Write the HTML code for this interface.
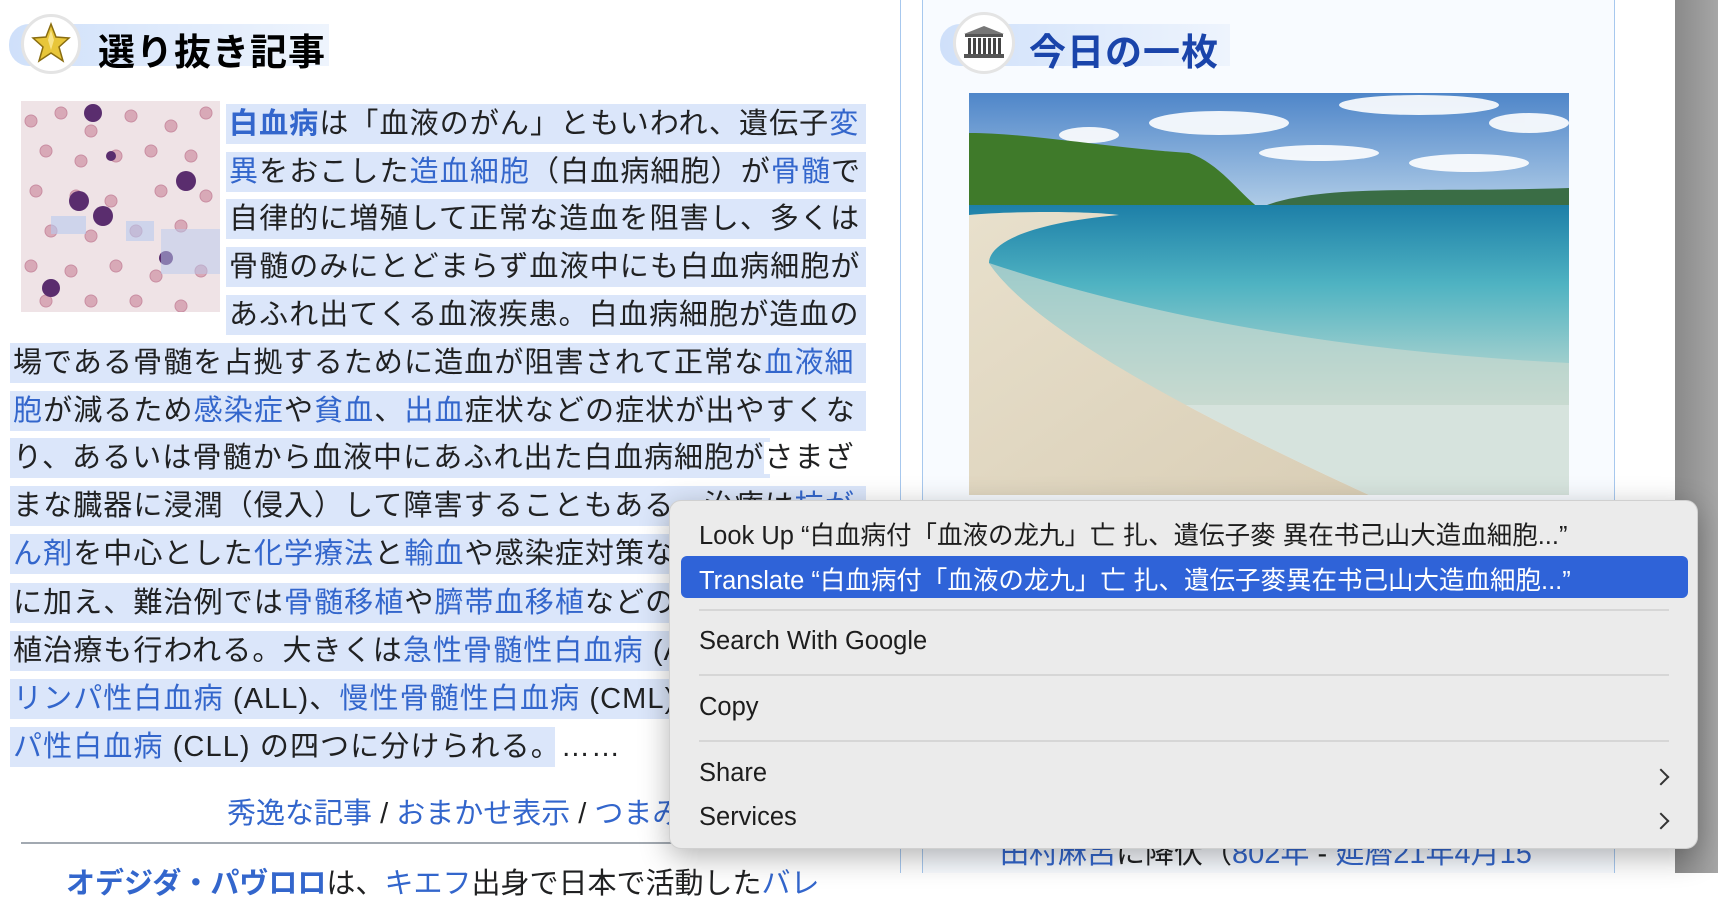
<!DOCTYPE html>
<html><head><meta charset="utf-8"><style>
*{margin:0;padding:0;box-sizing:border-box}
body{width:1718px;height:873px;overflow:hidden;background:#fff;position:relative;font-family:"Liberation Sans","Noto Sans CJK JP",sans-serif;color:#202122}
.a{position:absolute}
.ln{position:absolute;font-size:29px;letter-spacing:1.1px;line-height:40px;height:40px;white-space:nowrap;background:#dbe6fa;padding:0 3px}
.b{color:#3366cc}
.menu{position:absolute;left:669px;top:500px;width:1029px;height:349px;background:#ebebeb;border-radius:12px;box-shadow:0 8px 30px rgba(0,0,0,.3);border:1px solid #d0d0d0;font-size:25.5px;color:#1d1d1d}
.mi{position:absolute;left:29px;white-space:nowrap}
.sep{position:absolute;left:29px;right:28px;height:2px;background:#d6d6d6}
.chev{position:absolute;right:30px;width:12px;height:12px;border-right:2.5px solid #333;border-top:2.5px solid #333;transform:rotate(45deg)}
</style></head><body>
<div class="a" style="left:1675px;top:0;width:43px;height:873px;background:linear-gradient(90deg,#8a8a8a,#a6a6a6)"></div>
<div class="a" style="left:900px;top:0;width:1px;height:873px;background:#a7c8ee"></div>
<div class="a" style="left:922px;top:0;width:693px;height:873px;background:#f8fbff;border-left:1px solid #a7c8ee;border-right:1px solid #a7c8ee"></div>

<div class="a" style="left:9px;top:24px;width:320px;height:42px;background:linear-gradient(90deg,#cfe0fa,#eef4fd);border-radius:20px 0 0 20px"></div>
<div class="a" style="left:21px;top:14px;width:60px;height:60px;border-radius:50%;background:#fff;border:3px solid #e4e4e4"></div>
<svg class="a" style="left:31px;top:22px" width="40" height="42" viewBox="0 0 40 42"><polygon points="20,2 25,15 38,16 28,25 32,39 20,31 8,39 12,25 2,16 15,15" fill="#e8c63a" stroke="#8a6d10" stroke-width="1.5"/><polygon points="20,8 23,18 20,28 17,18" fill="#f8e48a"/></svg>
<div class="a" style="left:98px;top:22px;font-size:37px;font-weight:bold;color:#000;letter-spacing:1px">選り抜き記事</div>

<svg class="a" style="left:21px;top:101px" width="199" height="211">
<rect width="199" height="211" fill="#efe3e6"/>
<g fill="#d8a9b7" stroke="#c98ea2" stroke-width="1">
<circle cx="10" cy="20" r="6"/><circle cx="40" cy="12" r="6"/><circle cx="70" cy="30" r="6"/><circle cx="110" cy="15" r="6"/><circle cx="150" cy="25" r="6"/><circle cx="185" cy="12" r="6"/><circle cx="25" cy="50" r="6"/><circle cx="60" cy="60" r="6"/><circle cx="95" cy="55" r="6"/><circle cx="130" cy="50" r="6"/><circle cx="170" cy="55" r="6"/><circle cx="15" cy="90" r="6"/><circle cx="55" cy="95" r="6"/><circle cx="90" cy="100" r="6"/><circle cx="140" cy="90" r="6"/><circle cx="185" cy="95" r="6"/><circle cx="30" cy="130" r="6"/><circle cx="70" cy="135" r="6"/><circle cx="115" cy="130" r="6"/><circle cx="160" cy="125" r="6"/><circle cx="10" cy="165" r="6"/><circle cx="50" cy="170" r="6"/><circle cx="95" cy="165" r="6"/><circle cx="135" cy="175" r="6"/><circle cx="180" cy="170" r="6"/><circle cx="25" cy="200" r="6"/><circle cx="70" cy="200" r="6"/><circle cx="115" cy="200" r="6"/><circle cx="160" cy="205" r="6"/>
</g>
<g fill="#5a2d6e"><circle cx="72" cy="12" r="9"/><circle cx="58" cy="100" r="10"/><circle cx="165" cy="80" r="10"/><circle cx="82" cy="115" r="10"/><circle cx="30" cy="187" r="9"/><circle cx="145" cy="157" r="7"/><circle cx="90" cy="55" r="5"/></g>
<rect x="30" y="115" width="35" height="18" fill="#b8c9ee" opacity=".6"/><rect x="105" y="120" width="28" height="20" fill="#b8c9ee" opacity=".6"/><rect x="140" y="128" width="59" height="45" fill="#b8c9ee" opacity=".5"/>
</svg>

<div class="ln" style="left:226px;top:104px;width:640px"><span class="b" style="font-weight:bold">白血病</span>は「血液のがん」ともいわれ、遺伝子<span class="b">変</span></div>
<div class="ln" style="left:226px;top:152px;width:640px"><span class="b">異</span>をおこした<span class="b">造血細胞</span>（白血病細胞）が<span class="b">骨髄</span>で</div>
<div class="ln" style="left:226px;top:199px;width:640px">自律的に増殖して正常な造血を阻害し、多くは</div>
<div class="ln" style="left:226px;top:247px;width:640px">骨髄のみにとどまらず血液中にも白血病細胞が</div>
<div class="ln" style="left:226px;top:295px;width:640px">あふれ出てくる血液疾患。白血病細胞が造血の</div>
<div class="ln" style="left:10px;top:343px;width:856px">場である骨髄を占拠するために造血が阻害されて正常な<span class="b">血液細</span></div>
<div class="ln" style="left:10px;top:391px;width:856px"><span class="b">胞</span>が減るため<span class="b">感染症</span>や<span class="b">貧血</span>、<span class="b">出血</span>症状などの症状が出やすくな</div>
<div class="ln" style="left:10px;top:438px;width:760px">り、あるいは骨髄から血液中にあふれ出た白血病細胞が<span style="background:#fff">さまざ</span></div>
<div class="ln" style="left:10px;top:486px;width:856px">まな臓器に浸潤（侵入）して障害することもある。治療は<span class="b">抗が</span></div>
<div class="ln" style="left:10px;top:534px;width:856px"><span class="b">ん剤</span>を中心とした<span class="b">化学療法</span>と<span class="b">輸血</span>や感染症対策などの支持療法</div>
<div class="ln" style="left:10px;top:583px;width:856px">に加え、難治例では<span class="b">骨髄移植</span>や<span class="b">臍帯血移植</span>などの造血幹細胞移</div>
<div class="ln" style="left:10px;top:631px;width:856px">植治療も行われる。大きくは<span class="b">急性骨髄性白血病</span> (AML)、急性</div>
<div class="ln" style="left:10px;top:679px;width:856px"><span class="b">リンパ性白血病</span> (ALL)、<span class="b">慢性骨髄性白血病</span> (CML)、慢性リン</div>
<div class="ln" style="left:10px;top:727px;width:545px"><span class="b">パ性白血病</span> (CLL) の四つに分けられる。<span style="background:#fff">……</span></div>

<div class="a" style="left:227px;top:790px;font-size:29px;white-space:nowrap"><span class="b">秀逸な記事</span> / <span class="b">おまかせ表示</span> / <span class="b">つまみ読み</span></div>
<div class="a" style="left:21px;top:842px;width:878px;height:2px;background:#a2a9b1"></div>
<div class="a" style="left:66px;top:860px;font-size:29px;white-space:nowrap"><b class="b">オデジダ・パヴロロ</b>は、<span class="b">キエフ</span>出身で日本で活動した<span class="b">バレ</span></div>

<div class="a" style="left:940px;top:24px;width:290px;height:42px;background:linear-gradient(90deg,#cfe0fa,#eef4fd);border-radius:20px 0 0 20px"></div>
<div class="a" style="left:953px;top:12px;width:62px;height:62px;border-radius:50%;background:#fff;border:3px solid #e4e4e4"></div>
<svg class="a" style="left:962px;top:24px" width="44" height="36" viewBox="0 0 44 36"><polygon points="22,2 42,10 2,10" fill="#777"/><rect x="3" y="10" width="38" height="3" fill="#555"/><g fill="#444"><rect x="6" y="14" width="3" height="16"/><rect x="11" y="14" width="3" height="16"/><rect x="16" y="14" width="3" height="16"/><rect x="21" y="14" width="3" height="16"/><rect x="26" y="14" width="3" height="16"/><rect x="31" y="14" width="3" height="16"/><rect x="36" y="14" width="3" height="16"/></g><rect x="2" y="30" width="40" height="4" fill="#555"/></svg>
<div class="a" style="left:1029px;top:22px;font-size:37px;font-weight:bold;color:#1a44aa;letter-spacing:1px">今日の一枚</div>

<svg class="a" style="left:969px;top:93px" width="600" height="402" viewBox="0 0 600 402">
<defs>
<linearGradient id="sky" x1="0" y1="0" x2="0" y2="1"><stop offset="0" stop-color="#4f86c9"/><stop offset="1" stop-color="#b9d3ea"/></linearGradient>
<linearGradient id="sea" x1="0" y1="0" x2="0" y2="1"><stop offset="0" stop-color="#1d7fa8"/><stop offset=".4" stop-color="#4fb3c2"/><stop offset="1" stop-color="#c9ddd3"/></linearGradient>
<linearGradient id="sand" x1="0" y1="0" x2="1" y2="1"><stop offset="0" stop-color="#e8e0cc"/><stop offset="1" stop-color="#d9ceb6"/></linearGradient>
</defs>
<rect width="600" height="125" fill="url(#sky)"/>
<g fill="#fff" opacity=".9"><ellipse cx="120" cy="42" rx="30" ry="8"/><ellipse cx="250" cy="30" rx="70" ry="12"/><ellipse cx="450" cy="12" rx="80" ry="10"/><ellipse cx="560" cy="30" rx="40" ry="10"/><ellipse cx="350" cy="60" rx="60" ry="8"/><ellipse cx="500" cy="70" rx="60" ry="9"/><ellipse cx="190" cy="65" rx="20" ry="7"/></g>
<path d="M0,40 C60,40 140,55 220,60 C250,70 270,100 290,115 L0,125 Z" fill="#3f7a2a"/>
<path d="M290,115 C350,90 450,100 600,95 L600,125 L280,125 Z" fill="#3a6d45"/>
<rect y="112" width="600" height="200" fill="url(#sea)"/>
<path d="M0,122 C40,118 120,118 150,122 C60,130 20,150 20,170 C60,230 200,310 400,402 L0,402 Z" fill="url(#sand)"/>
<path d="M20,170 C60,230 200,310 400,402 L600,402 L600,270 C400,260 200,230 20,170Z" fill="#c8d9cf" opacity=".7"/>
</svg>

<div class="a" style="left:1000px;top:830px;font-size:29px;white-space:nowrap"><span class="b">田村麻呂</span>に降伏（<span class="b">802年</span> - <span class="b">延暦21年4月15</span></div>

<div class="menu">
<div class="mi" style="top:14px">Look Up “白血病付「血液の龙九」亡 扎、遺伝子麥 異在书己山大造血細胞...”</div>
<div class="a" style="left:11px;top:55px;width:1007px;height:42px;background:#2f63d8;border-radius:6px"></div>
<div class="mi" style="top:59px;color:#fff">Translate “白血病付「血液の龙九」亡 扎、遺伝子麥異在书己山大造血細胞...”</div>
<div class="sep" style="top:108px"></div>
<div class="mi" style="top:126px">Search With Google</div>
<div class="sep" style="top:173px"></div>
<div class="mi" style="top:192px">Copy</div>
<div class="sep" style="top:239px"></div>
<div class="mi" style="top:258px">Share</div>
<div class="chev" style="top:270px"></div>
<div class="mi" style="top:302px">Services</div>
<div class="chev" style="top:314px"></div>
</div>
</body></html>
